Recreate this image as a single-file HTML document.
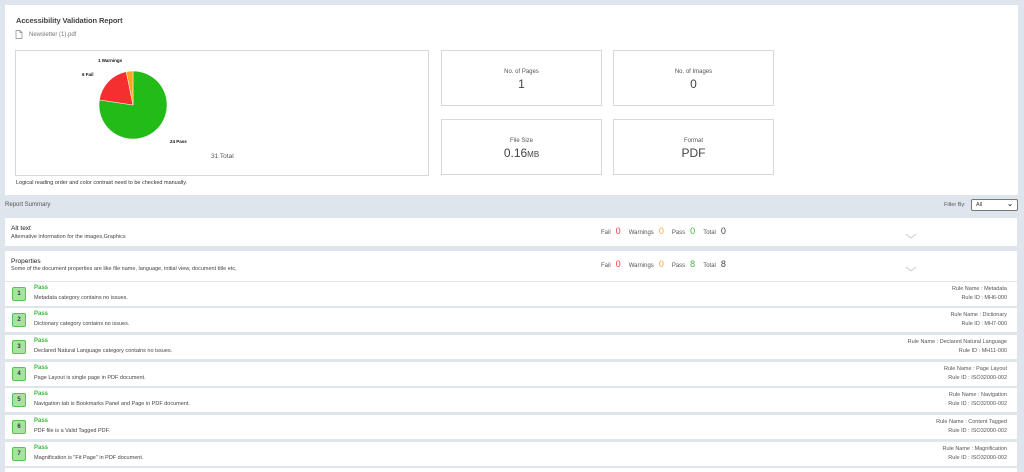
<!DOCTYPE html>
<html><head><meta charset="utf-8"><style>
*{box-sizing:border-box;margin:0;padding:0}
html,body{width:1024px;height:472px;overflow:hidden}
body{background:#dfe5ec;font-family:"Liberation Sans",sans-serif;color:#333;position:relative}
.a{position:absolute}
.card{background:#fff}
.box{position:absolute;background:#fff;border:1px solid #d6d9dc;text-align:center}
.box .l{font-size:6px;color:#555;margin-top:18px}
.box .v{font-size:12px;color:#444;margin-top:2px}
.row{position:absolute;left:5px;width:1012px;height:25px;background:#fff;border-top:1px solid #e2e5e8}
.num{position:absolute;left:7px;top:5px;width:14px;height:14px;background:#a6e3a0;border:1px solid #5cbf55;border-radius:2px;font-size:6px;font-weight:bold;text-align:center;line-height:12px;color:#333}
.ps{position:absolute;left:29px;top:3px;font-size:6px;font-weight:bold;color:#3cb83a}
.ds{position:absolute;left:29px;top:13px;font-size:5.5px;color:#444}
.rn{position:absolute;right:10px;top:3px;font-size:5.5px;color:#555;text-align:right;line-height:9px}
.cnt{position:absolute;font-size:6px;color:#555}
.cnt b{font-weight:normal;font-size:9px;margin:0 8px 0 5px}
</style></head><body>
<div class="a card" style="left:5px;top:5px;width:1013px;height:190px"></div>
<div class="a" style="left:16px;top:16px;font-size:7.5px;color:#222;font-weight:bold;letter-spacing:-.1px;opacity:.85">Accessibility Validation Report</div>
<svg class="a" style="left:15px;top:30px" width="8" height="9" viewBox="0 0 8 9"><path d="M1 .5h4l2 2v6H1z M5 .5v2h2" fill="none" stroke="#888" stroke-width=".7"/></svg>
<div class="a" style="left:29px;top:32px;font-size:6px;color:#777">Newsletter (1).pdf</div>
<div class="box" style="left:15px;top:50px;width:414px;height:126px"></div>
<svg class="a" style="left:0;top:0" width="440" height="190">
<path d="M133 105 L133 71 A34 34 0 1 1 99.4 99.9Z" fill="#22bb17" stroke="#fff" stroke-width=".5"/>
<path d="M133 105 L99.4 99.9 A34 34 0 0 1 126.2 71.7Z" fill="#f52f2f" stroke="#fff" stroke-width=".5"/>
<path d="M133 105 L126.2 71.7 A34 34 0 0 1 133 71Z" fill="#f7a81b" stroke="#fff" stroke-width=".5"/>
<text x="98" y="62" font-size="4.5" font-weight="bold" fill="#111" font-family="Liberation Sans">1 Warnings</text>
<text x="82" y="76" font-size="4.5" font-weight="bold" fill="#111" font-family="Liberation Sans">6 Fail</text>
<text x="170" y="143" font-size="4.5" font-weight="bold" fill="#111" font-family="Liberation Sans">24 Pass</text>
<text x="211" y="158" font-size="6.5" fill="#555" font-family="Liberation Sans">31 Total</text>
</svg>
<div class="a" style="left:16px;top:180px;font-size:5.5px;color:#333">Logical reading order and color contrast need to be checked manually.</div>
<div class="box" style="left:441px;top:50px;width:161px;height:56px"><div class="l">No. of Pages</div><div class="v">1</div></div>
<div class="box" style="left:613px;top:50px;width:161px;height:56px"><div class="l">No. of Images</div><div class="v">0</div></div>
<div class="box" style="left:441px;top:119px;width:161px;height:56px"><div class="l">File Size</div><div class="v">0.16<span style="font-size:8px">MB</span></div></div>
<div class="box" style="left:613px;top:119px;width:161px;height:56px"><div class="l">Format</div><div class="v">PDF</div></div>

<div class="a" style="left:5px;top:202px;font-size:6px;color:#555">Report Summary</div>
<div class="a" style="left:944px;top:202px;font-size:5.5px;color:#555">Filter By:</div>
<div class="a" style="left:971px;top:199px;width:47px;height:12px;background:#fff;border:1px solid #777;border-radius:2px;font-size:5.5px;padding:2px 4px;color:#333">All<span style="position:absolute;right:4px;top:0;font-size:7px;font-weight:bold">&#8964;</span></div>

<div class="a card" style="left:5px;top:218px;width:1012px;height:28px"></div>
<div class="a" style="left:11px;top:225px;font-size:6.5px;color:#222">Alt text</div>
<div class="a" style="left:11px;top:234px;font-size:5.5px;color:#444">Alternative information for the images,Graphics</div>
<div class="cnt" style="left:601px;top:226px">Fail<b style="color:#f03c3c">0</b>Warnings<b style="color:#f5a742">0</b>Pass<b style="color:#3cb83a">0</b>Total<b style="color:#444">0</b></div>
<svg class="a" style="left:905px;top:233px" width="12" height="6"><path d="M1 1l5 4 5-4" fill="none" stroke="#bbb" stroke-width=".8"/></svg>

<div class="a card" style="left:5px;top:251px;width:1012px;height:30px"></div>
<div class="a" style="left:11px;top:258px;font-size:6.5px;color:#222">Properties</div>
<div class="a" style="left:11px;top:266px;font-size:5.5px;color:#444">Some of the document properties are like file name, language, initial view, document title etc,</div>
<div class="cnt" style="left:601px;top:259px">Fail<b style="color:#f03c3c">0</b>Warnings<b style="color:#f5a742">0</b>Pass<b style="color:#3cb83a">8</b>Total<b style="color:#444">8</b></div>
<svg class="a" style="left:905px;top:266px" width="12" height="6"><path d="M1 1l5 4 5-4" fill="none" stroke="#bbb" stroke-width=".8"/></svg>

<div class="row" style="top:281px"><div class="num">1</div><div class="ps">Pass</div><div class="ds">Metadata category contains no issues.</div><div class="rn">Rule Name : Metadata<br>Rule ID : MH6-000</div></div>
<div class="row" style="top:307px"><div class="num">2</div><div class="ps">Pass</div><div class="ds">Dictionary category contains no issues.</div><div class="rn">Rule Name : Dictionary<br>Rule ID : MH7-000</div></div>
<div class="row" style="top:334px"><div class="num">3</div><div class="ps">Pass</div><div class="ds">Declared Natural Language category contains no issues.</div><div class="rn">Rule Name : Declared Natural Language<br>Rule ID : MH11-000</div></div>
<div class="row" style="top:361px"><div class="num">4</div><div class="ps">Pass</div><div class="ds">Page Layout is single page in PDF document.</div><div class="rn">Rule Name : Page Layout<br>Rule ID : ISO32000-002</div></div>
<div class="row" style="top:387px"><div class="num">5</div><div class="ps">Pass</div><div class="ds">Navigation tab is Bookmarks Panel and Page in PDF document.</div><div class="rn">Rule Name : Navigation<br>Rule ID : ISO32000-002</div></div>
<div class="row" style="top:414px"><div class="num">6</div><div class="ps">Pass</div><div class="ds">PDF file is a Valid Tagged PDF.</div><div class="rn">Rule Name : Content Tagged<br>Rule ID : ISO32000-002</div></div>
<div class="row" style="top:441px"><div class="num">7</div><div class="ps">Pass</div><div class="ds">Magnification is "Fit Page" in PDF document.</div><div class="rn">Rule Name : Magnification<br>Rule ID : ISO32000-002</div></div>
<div class="row" style="top:467px"></div>
</body></html>
